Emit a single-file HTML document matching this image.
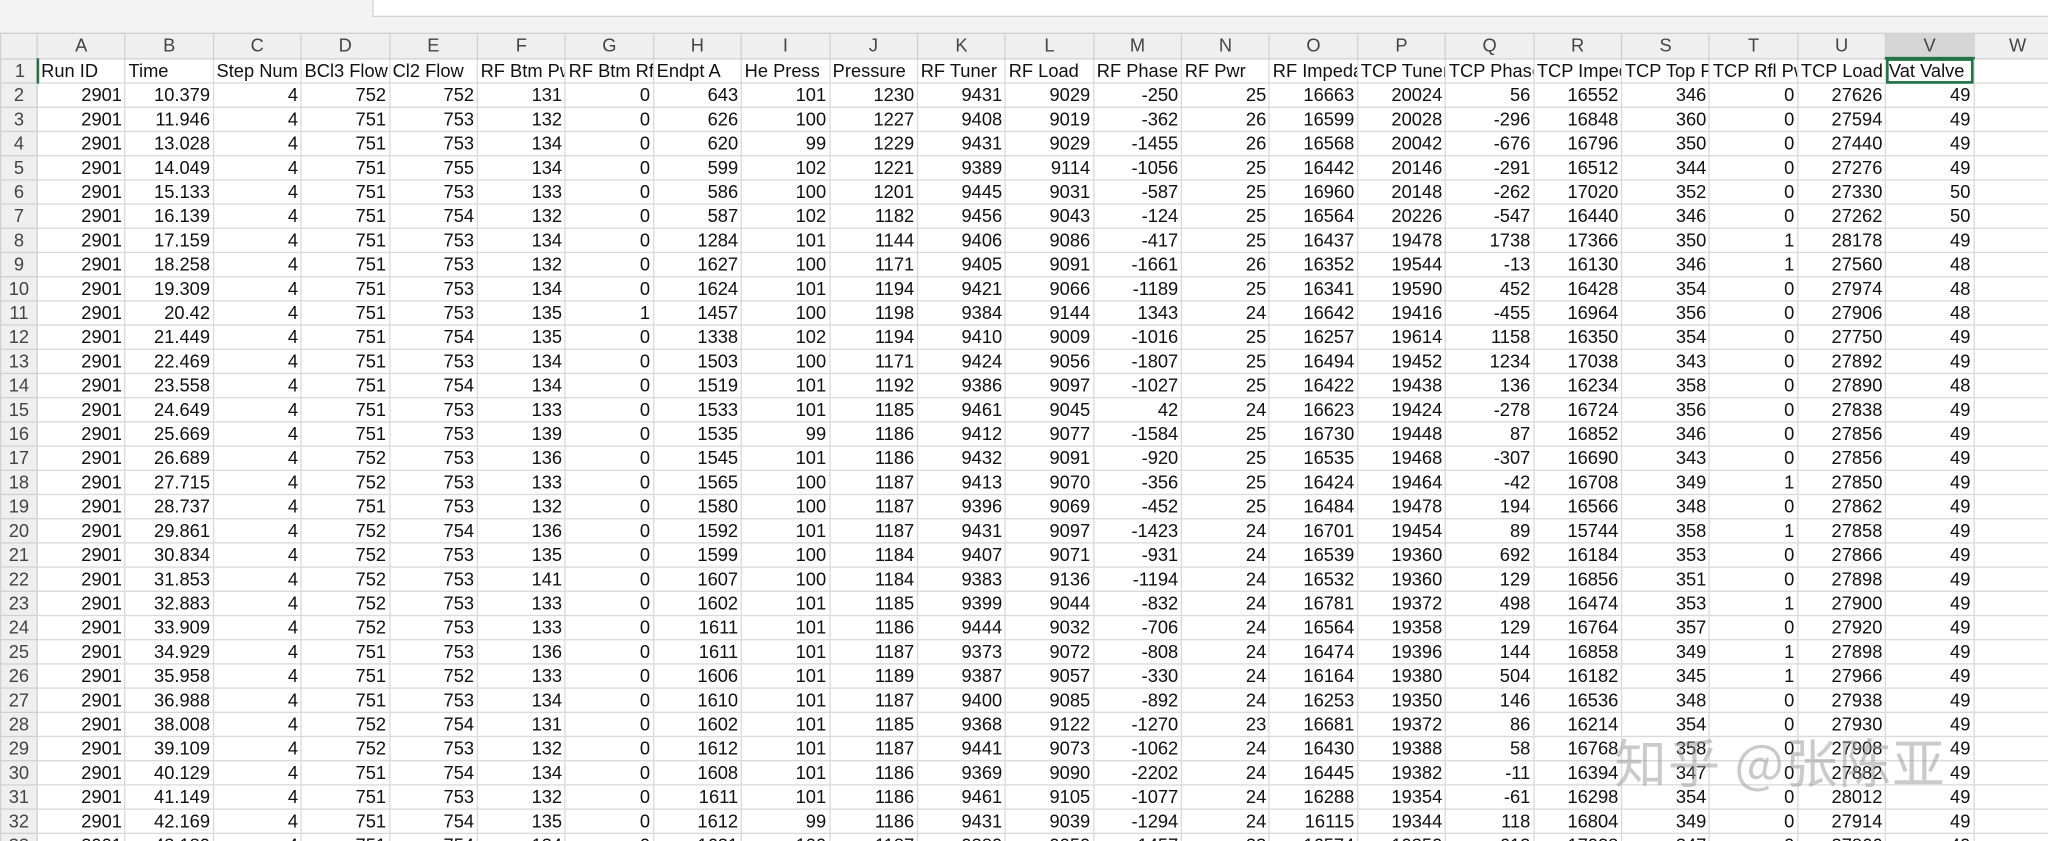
<!DOCTYPE html>
<html><head><meta charset="utf-8">
<style>
html,body{margin:0;padding:0;width:2048px;height:841px;overflow:hidden;background:#fff}
#s{position:absolute;left:0;top:0;width:1568px;height:644px;transform:scale(1.30612);transform-origin:0 0;background:#fff;overflow:hidden;font-family:"Liberation Sans","Noto Sans CJK SC",sans-serif}
#top{position:absolute;left:0;top:0;width:1568px;height:25px;background:#f3f3f3}
#fb{position:absolute;left:285px;top:-1px;width:1290px;height:12px;background:#fff;border:1px solid #d2d2d2}
table{position:absolute;left:0;top:25px;width:1578.2px;border-collapse:collapse;table-layout:fixed;font-size:14px;color:#111;transform:scaleY(1.0294);transform-origin:0 0}
td{height:18px;padding:0 2px;border:1px solid #dadada;white-space:nowrap;overflow:hidden;text-align:right;line-height:17px;box-sizing:border-box;max-width:67.4px}
tr.h td{height:18px;background:#efefef;text-align:center;color:#444;border-color:#d0d0d0;font-size:14px}
td.r{background:#efefef;text-align:center;color:#444;border-color:#d0d0d0;padding:0}
tr.t td{text-align:left;padding-left:2px;text-overflow:clip}
tr.t td.r{text-align:center}
td.sel{outline:2px solid #217346;outline-offset:-2px}
tr.h td.sv{background:#d6d6d6;border-bottom:2px solid #217346}
#wm{position:absolute;left:1236px;top:553px;font-size:40px;color:rgba(150,150,150,.5);font-family:"Noto Sans CJK SC",sans-serif;letter-spacing:1px;white-space:nowrap}
</style></head><body><div id="s">
<div id="top"><div id="fb"></div></div>
<table>
<colgroup><col style="width:28px"><col style="width:67.4px"><col style="width:67.4px"><col style="width:67.4px"><col style="width:67.4px"><col style="width:67.4px"><col style="width:67.4px"><col style="width:67.4px"><col style="width:67.4px"><col style="width:67.4px"><col style="width:67.4px"><col style="width:67.4px"><col style="width:67.4px"><col style="width:67.4px"><col style="width:67.4px"><col style="width:67.4px"><col style="width:67.4px"><col style="width:67.4px"><col style="width:67.4px"><col style="width:67.4px"><col style="width:67.4px"><col style="width:67.4px"><col style="width:67.4px"><col style="width:67.4px"></colgroup>
<tr class="h"><td class="r"></td><td>A</td><td>B</td><td>C</td><td>D</td><td>E</td><td>F</td><td>G</td><td>H</td><td>I</td><td>J</td><td>K</td><td>L</td><td>M</td><td>N</td><td>O</td><td>P</td><td>Q</td><td>R</td><td>S</td><td>T</td><td>U</td><td class="sv">V</td><td>W</td></tr>
<tr class="t"><td class="r" style="border-right:2px solid #217346">1</td><td>Run ID</td><td>Time</td><td>Step Num</td><td>BCl3 Flow</td><td>Cl2 Flow</td><td>RF Btm Pw</td><td>RF Btm Rfl</td><td>Endpt A</td><td>He Press</td><td>Pressure</td><td>RF Tuner</td><td>RF Load</td><td>RF Phase E</td><td>RF Pwr</td><td>RF Impeda</td><td>TCP Tuner</td><td>TCP Phase</td><td>TCP Imped</td><td>TCP Top P</td><td>TCP Rfl Pw</td><td>TCP Load</td><td class="sel">Vat Valve</td><td></td></tr>
<tr><td class="r">2</td><td>2901</td><td>10.379</td><td>4</td><td>752</td><td>752</td><td>131</td><td>0</td><td>643</td><td>101</td><td>1230</td><td>9431</td><td>9029</td><td>-250</td><td>25</td><td>16663</td><td>20024</td><td>56</td><td>16552</td><td>346</td><td>0</td><td>27626</td><td>49</td><td></td></tr>
<tr><td class="r">3</td><td>2901</td><td>11.946</td><td>4</td><td>751</td><td>753</td><td>132</td><td>0</td><td>626</td><td>100</td><td>1227</td><td>9408</td><td>9019</td><td>-362</td><td>26</td><td>16599</td><td>20028</td><td>-296</td><td>16848</td><td>360</td><td>0</td><td>27594</td><td>49</td><td></td></tr>
<tr><td class="r">4</td><td>2901</td><td>13.028</td><td>4</td><td>751</td><td>753</td><td>134</td><td>0</td><td>620</td><td>99</td><td>1229</td><td>9431</td><td>9029</td><td>-1455</td><td>26</td><td>16568</td><td>20042</td><td>-676</td><td>16796</td><td>350</td><td>0</td><td>27440</td><td>49</td><td></td></tr>
<tr><td class="r">5</td><td>2901</td><td>14.049</td><td>4</td><td>751</td><td>755</td><td>134</td><td>0</td><td>599</td><td>102</td><td>1221</td><td>9389</td><td>9114</td><td>-1056</td><td>25</td><td>16442</td><td>20146</td><td>-291</td><td>16512</td><td>344</td><td>0</td><td>27276</td><td>49</td><td></td></tr>
<tr><td class="r">6</td><td>2901</td><td>15.133</td><td>4</td><td>751</td><td>753</td><td>133</td><td>0</td><td>586</td><td>100</td><td>1201</td><td>9445</td><td>9031</td><td>-587</td><td>25</td><td>16960</td><td>20148</td><td>-262</td><td>17020</td><td>352</td><td>0</td><td>27330</td><td>50</td><td></td></tr>
<tr><td class="r">7</td><td>2901</td><td>16.139</td><td>4</td><td>751</td><td>754</td><td>132</td><td>0</td><td>587</td><td>102</td><td>1182</td><td>9456</td><td>9043</td><td>-124</td><td>25</td><td>16564</td><td>20226</td><td>-547</td><td>16440</td><td>346</td><td>0</td><td>27262</td><td>50</td><td></td></tr>
<tr><td class="r">8</td><td>2901</td><td>17.159</td><td>4</td><td>751</td><td>753</td><td>134</td><td>0</td><td>1284</td><td>101</td><td>1144</td><td>9406</td><td>9086</td><td>-417</td><td>25</td><td>16437</td><td>19478</td><td>1738</td><td>17366</td><td>350</td><td>1</td><td>28178</td><td>49</td><td></td></tr>
<tr><td class="r">9</td><td>2901</td><td>18.258</td><td>4</td><td>751</td><td>753</td><td>132</td><td>0</td><td>1627</td><td>100</td><td>1171</td><td>9405</td><td>9091</td><td>-1661</td><td>26</td><td>16352</td><td>19544</td><td>-13</td><td>16130</td><td>346</td><td>1</td><td>27560</td><td>48</td><td></td></tr>
<tr><td class="r">10</td><td>2901</td><td>19.309</td><td>4</td><td>751</td><td>753</td><td>134</td><td>0</td><td>1624</td><td>101</td><td>1194</td><td>9421</td><td>9066</td><td>-1189</td><td>25</td><td>16341</td><td>19590</td><td>452</td><td>16428</td><td>354</td><td>0</td><td>27974</td><td>48</td><td></td></tr>
<tr><td class="r">11</td><td>2901</td><td>20.42</td><td>4</td><td>751</td><td>753</td><td>135</td><td>1</td><td>1457</td><td>100</td><td>1198</td><td>9384</td><td>9144</td><td>1343</td><td>24</td><td>16642</td><td>19416</td><td>-455</td><td>16964</td><td>356</td><td>0</td><td>27906</td><td>48</td><td></td></tr>
<tr><td class="r">12</td><td>2901</td><td>21.449</td><td>4</td><td>751</td><td>754</td><td>135</td><td>0</td><td>1338</td><td>102</td><td>1194</td><td>9410</td><td>9009</td><td>-1016</td><td>25</td><td>16257</td><td>19614</td><td>1158</td><td>16350</td><td>354</td><td>0</td><td>27750</td><td>49</td><td></td></tr>
<tr><td class="r">13</td><td>2901</td><td>22.469</td><td>4</td><td>751</td><td>753</td><td>134</td><td>0</td><td>1503</td><td>100</td><td>1171</td><td>9424</td><td>9056</td><td>-1807</td><td>25</td><td>16494</td><td>19452</td><td>1234</td><td>17038</td><td>343</td><td>0</td><td>27892</td><td>49</td><td></td></tr>
<tr><td class="r">14</td><td>2901</td><td>23.558</td><td>4</td><td>751</td><td>754</td><td>134</td><td>0</td><td>1519</td><td>101</td><td>1192</td><td>9386</td><td>9097</td><td>-1027</td><td>25</td><td>16422</td><td>19438</td><td>136</td><td>16234</td><td>358</td><td>0</td><td>27890</td><td>48</td><td></td></tr>
<tr><td class="r">15</td><td>2901</td><td>24.649</td><td>4</td><td>751</td><td>753</td><td>133</td><td>0</td><td>1533</td><td>101</td><td>1185</td><td>9461</td><td>9045</td><td>42</td><td>24</td><td>16623</td><td>19424</td><td>-278</td><td>16724</td><td>356</td><td>0</td><td>27838</td><td>49</td><td></td></tr>
<tr><td class="r">16</td><td>2901</td><td>25.669</td><td>4</td><td>751</td><td>753</td><td>139</td><td>0</td><td>1535</td><td>99</td><td>1186</td><td>9412</td><td>9077</td><td>-1584</td><td>25</td><td>16730</td><td>19448</td><td>87</td><td>16852</td><td>346</td><td>0</td><td>27856</td><td>49</td><td></td></tr>
<tr><td class="r">17</td><td>2901</td><td>26.689</td><td>4</td><td>752</td><td>753</td><td>136</td><td>0</td><td>1545</td><td>101</td><td>1186</td><td>9432</td><td>9091</td><td>-920</td><td>25</td><td>16535</td><td>19468</td><td>-307</td><td>16690</td><td>343</td><td>0</td><td>27856</td><td>49</td><td></td></tr>
<tr><td class="r">18</td><td>2901</td><td>27.715</td><td>4</td><td>752</td><td>753</td><td>133</td><td>0</td><td>1565</td><td>100</td><td>1187</td><td>9413</td><td>9070</td><td>-356</td><td>25</td><td>16424</td><td>19464</td><td>-42</td><td>16708</td><td>349</td><td>1</td><td>27850</td><td>49</td><td></td></tr>
<tr><td class="r">19</td><td>2901</td><td>28.737</td><td>4</td><td>751</td><td>753</td><td>132</td><td>0</td><td>1580</td><td>100</td><td>1187</td><td>9396</td><td>9069</td><td>-452</td><td>25</td><td>16484</td><td>19478</td><td>194</td><td>16566</td><td>348</td><td>0</td><td>27862</td><td>49</td><td></td></tr>
<tr><td class="r">20</td><td>2901</td><td>29.861</td><td>4</td><td>752</td><td>754</td><td>136</td><td>0</td><td>1592</td><td>101</td><td>1187</td><td>9431</td><td>9097</td><td>-1423</td><td>24</td><td>16701</td><td>19454</td><td>89</td><td>15744</td><td>358</td><td>1</td><td>27858</td><td>49</td><td></td></tr>
<tr><td class="r">21</td><td>2901</td><td>30.834</td><td>4</td><td>752</td><td>753</td><td>135</td><td>0</td><td>1599</td><td>100</td><td>1184</td><td>9407</td><td>9071</td><td>-931</td><td>24</td><td>16539</td><td>19360</td><td>692</td><td>16184</td><td>353</td><td>0</td><td>27866</td><td>49</td><td></td></tr>
<tr><td class="r">22</td><td>2901</td><td>31.853</td><td>4</td><td>752</td><td>753</td><td>141</td><td>0</td><td>1607</td><td>100</td><td>1184</td><td>9383</td><td>9136</td><td>-1194</td><td>24</td><td>16532</td><td>19360</td><td>129</td><td>16856</td><td>351</td><td>0</td><td>27898</td><td>49</td><td></td></tr>
<tr><td class="r">23</td><td>2901</td><td>32.883</td><td>4</td><td>752</td><td>753</td><td>133</td><td>0</td><td>1602</td><td>101</td><td>1185</td><td>9399</td><td>9044</td><td>-832</td><td>24</td><td>16781</td><td>19372</td><td>498</td><td>16474</td><td>353</td><td>1</td><td>27900</td><td>49</td><td></td></tr>
<tr><td class="r">24</td><td>2901</td><td>33.909</td><td>4</td><td>752</td><td>753</td><td>133</td><td>0</td><td>1611</td><td>101</td><td>1186</td><td>9444</td><td>9032</td><td>-706</td><td>24</td><td>16564</td><td>19358</td><td>129</td><td>16764</td><td>357</td><td>0</td><td>27920</td><td>49</td><td></td></tr>
<tr><td class="r">25</td><td>2901</td><td>34.929</td><td>4</td><td>751</td><td>753</td><td>136</td><td>0</td><td>1611</td><td>101</td><td>1187</td><td>9373</td><td>9072</td><td>-808</td><td>24</td><td>16474</td><td>19396</td><td>144</td><td>16858</td><td>349</td><td>1</td><td>27898</td><td>49</td><td></td></tr>
<tr><td class="r">26</td><td>2901</td><td>35.958</td><td>4</td><td>751</td><td>752</td><td>133</td><td>0</td><td>1606</td><td>101</td><td>1189</td><td>9387</td><td>9057</td><td>-330</td><td>24</td><td>16164</td><td>19380</td><td>504</td><td>16182</td><td>345</td><td>1</td><td>27966</td><td>49</td><td></td></tr>
<tr><td class="r">27</td><td>2901</td><td>36.988</td><td>4</td><td>751</td><td>753</td><td>134</td><td>0</td><td>1610</td><td>101</td><td>1187</td><td>9400</td><td>9085</td><td>-892</td><td>24</td><td>16253</td><td>19350</td><td>146</td><td>16536</td><td>348</td><td>0</td><td>27938</td><td>49</td><td></td></tr>
<tr><td class="r">28</td><td>2901</td><td>38.008</td><td>4</td><td>752</td><td>754</td><td>131</td><td>0</td><td>1602</td><td>101</td><td>1185</td><td>9368</td><td>9122</td><td>-1270</td><td>23</td><td>16681</td><td>19372</td><td>86</td><td>16214</td><td>354</td><td>0</td><td>27930</td><td>49</td><td></td></tr>
<tr><td class="r">29</td><td>2901</td><td>39.109</td><td>4</td><td>752</td><td>753</td><td>132</td><td>0</td><td>1612</td><td>101</td><td>1187</td><td>9441</td><td>9073</td><td>-1062</td><td>24</td><td>16430</td><td>19388</td><td>58</td><td>16768</td><td>358</td><td>0</td><td>27908</td><td>49</td><td></td></tr>
<tr><td class="r">30</td><td>2901</td><td>40.129</td><td>4</td><td>751</td><td>754</td><td>134</td><td>0</td><td>1608</td><td>101</td><td>1186</td><td>9369</td><td>9090</td><td>-2202</td><td>24</td><td>16445</td><td>19382</td><td>-11</td><td>16394</td><td>347</td><td>0</td><td>27882</td><td>49</td><td></td></tr>
<tr><td class="r">31</td><td>2901</td><td>41.149</td><td>4</td><td>751</td><td>753</td><td>132</td><td>0</td><td>1611</td><td>101</td><td>1186</td><td>9461</td><td>9105</td><td>-1077</td><td>24</td><td>16288</td><td>19354</td><td>-61</td><td>16298</td><td>354</td><td>0</td><td>28012</td><td>49</td><td></td></tr>
<tr><td class="r">32</td><td>2901</td><td>42.169</td><td>4</td><td>751</td><td>754</td><td>135</td><td>0</td><td>1612</td><td>99</td><td>1186</td><td>9431</td><td>9039</td><td>-1294</td><td>24</td><td>16115</td><td>19344</td><td>118</td><td>16804</td><td>349</td><td>0</td><td>27914</td><td>49</td><td></td></tr>
<tr><td class="r">33</td><td>2901</td><td>43.189</td><td>4</td><td>751</td><td>754</td><td>134</td><td>0</td><td>1621</td><td>100</td><td>1187</td><td>9380</td><td>9050</td><td>-1457</td><td>23</td><td>16574</td><td>19350</td><td>612</td><td>17028</td><td>347</td><td>0</td><td>27866</td><td>49</td><td></td></tr>
</table>
<div id="wm">知乎 @张陈亚</div>
</div></body></html>
